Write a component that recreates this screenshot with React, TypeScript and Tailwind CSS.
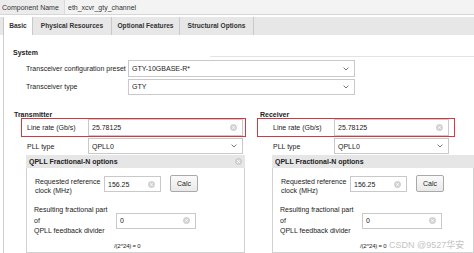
import React from "react";

const ClearIcon = () => (
  <svg width="7" height="7" viewBox="0 0 10 10" className="shrink-0">
    <circle cx="5" cy="5" r="4.4" fill="#d6d6d6" stroke="#bcbcbc" strokeWidth="0.8" />
    <path d="M3.3 3.3 L6.7 6.7 M6.7 3.3 L3.3 6.7" stroke="#fff" strokeWidth="1.2" />
  </svg>
);

const Chevron = () => (
  <svg width="6" height="4" viewBox="0 0 6 4" className="shrink-0">
    <path d="M0.6 0.6 L3 3 L5.4 0.6" fill="none" stroke="#666" strokeWidth="0.9" />
  </svg>
);

const Field = ({ value, className, select }: { value: string; className: string; select?: boolean }) => (
  <div className={`flex items-center justify-between border border-[#c9c9c9] bg-white pl-[3px] pr-[5px] ${className}`}>
    <span>{value}</span>
    {select ? <Chevron /> : <ClearIcon />}
  </div>
);

const CalcButton = () => (
  <div className="ml-[9px] flex h-[17px] w-[28px] items-center justify-center rounded-[2px] border border-[#a9a9a9] bg-gradient-to-b from-[#fafafa] to-[#e9e9e9] text-[7px]">
    Calc
  </div>
);

const tabs = [
  { label: "Basic", w: "w-[30px]", active: true },
  { label: "Physical Resources", w: "w-[79px]" },
  { label: "Optional Features", w: "w-[68px]" },
  { label: "Structural Options", w: "w-[74px]" },
];

const LinkColumn = ({
  title,
  fieldW,
  redBox,
  groupW,
  headerIcon,
}: {
  title: string;
  fieldW: string;
  redBox: string;
  groupW: string;
  headerIcon?: boolean;
}) => (
  <div className="flex flex-col">
    <div className="flex h-[8px] items-center pl-[10px] font-bold">{title}</div>
    <div className="relative mt-[1px] flex h-[17px] items-center">
      <span className="w-[84px] pl-[23px]">Line rate (Gb/s)</span>
      <Field value="25.78125" className={`h-[17px] ${fieldW}`} />
      <div className={`absolute -top-[1px] -bottom-[1px] border border-[#d8353f] ${redBox}`} />
    </div>
    <div className="mt-[2px] flex h-[16px] items-center">
      <span className="w-[84px] pl-[23px]">PLL type</span>
      <Field value="QPLL0" select className={`h-[16px] ${fieldW}`} />
    </div>
    <div className={`ml-[22px] mt-[1px] flex flex-col ${groupW}`}>
      <div className="flex h-[13px] items-center justify-between bg-[#e6e6e6] pl-[3px] pr-[3px] font-bold">
        <span>QPLL Fractional-N options</span>
        {headerIcon && <ClearIcon />}
      </div>
      <div className="h-[85px] border-x border-b border-[#d2d2d2]">
        <div className="mt-[7px] flex items-start">
          <div className="w-[77px] pl-[8px] pt-[2px] leading-[9px]">
            Requested reference
            <br />
            clock (MHz)
          </div>
          <Field value="156.25" className="mt-[1px] h-[16px] w-[57px]" />
          <CalcButton />
        </div>
        <div className="mt-[10px] flex items-center">
          <div className="w-[89px] pl-[7px] leading-[10.5px]">
            Resulting fractional part
            <br />
            of
            <br />
            QPLL feedback divider
          </div>
          <Field value="0" className="h-[16px] w-[80px]" />
        </div>
        <div className="mt-[6px] pl-[87px] text-[6px] tracking-[-0.2px]">/(2^24) = 0</div>
      </div>
    </div>
  </div>
);

export default function App() {
  return (
    <div className="relative flex h-[253px] w-[474px] flex-col overflow-hidden bg-white font-['Liberation_Sans',Arial,sans-serif] text-[7px] leading-none text-[#222]">
      <div className="flex h-[15px] shrink-0 border-b border-[#d6d6d6] bg-[#ececec]">
        <span className="flex w-[64px] items-center pl-[2px] text-[#333]">Component Name</span>
        <span className="flex flex-1 items-center border-l border-[#dadada] bg-[#f3f3f3] pl-[3px] text-[#333]">
          eth_xcvr_gty_channel
        </span>
      </div>

      <div className="mt-[2px] flex h-[18px] shrink-0 bg-[#e7e7e7] pl-[3px]">
        {tabs.map((t) => (
          <div
            key={t.label}
            className={`flex items-center justify-center border-r border-[#c9c9c9] text-[6.6px] font-bold text-[#333] ${t.w} ${
              t.active ? "border-l bg-white" : ""
            }`}
          >
            {t.label}
          </div>
        ))}
      </div>

      <div className="ml-[3px] flex flex-1 flex-col border-l border-[#d0d0d0]">
        <div className="mt-[13px] flex h-[8px] items-center">
          <span className="pl-[9px] font-bold">System</span>
          <div className="ml-auto mt-[8px] h-px w-[264px] bg-[#e2e2e2]" />
        </div>
        <div className="mt-[4px] flex h-[17px] items-center">
          <span className="w-[124px] pl-[22px]">Transceiver configuration preset</span>
          <Field value="GTY-10GBASE-R*" select className="h-[17px] w-[227px]" />
        </div>
        <div className="mt-[1px] flex h-[17px] items-center">
          <span className="w-[124px] pl-[22px]">Transceiver type</span>
          <Field value="GTY" select className="h-[16px] w-[227px]" />
        </div>

        <div className="mt-[15px] grid grid-cols-[246px_1fr]">
          <LinkColumn title="Transmitter" fieldW="w-[155px]" redBox="left-[17px] right-[4px]" groupW="w-[219px]" headerIcon />
          <LinkColumn title="Receiver" fieldW="w-[115px]" redBox="left-[7px] w-[198px]" groupW="w-[202px]" />
        </div>
      </div>

      <span className="absolute left-[389px] top-[241px] font-['Liberation_Sans','Noto_Sans_CJK_SC',sans-serif] text-[9px] text-[#c4c4c4]">
        CSDN @9527华安
      </span>
    </div>
  );
}
